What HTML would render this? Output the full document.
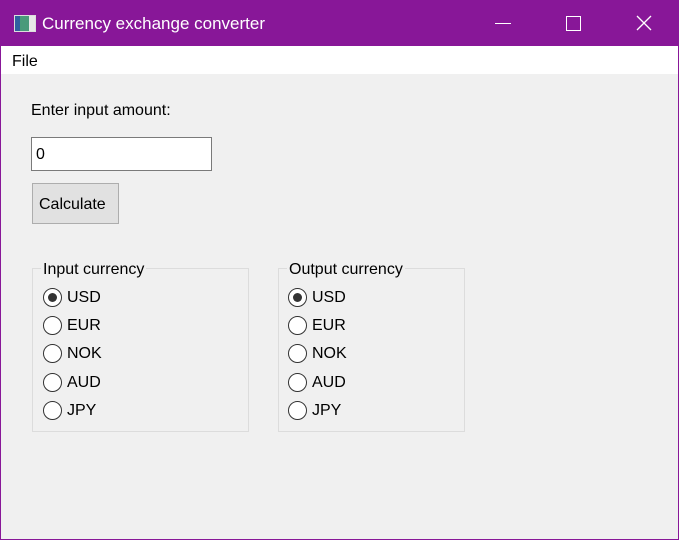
<!DOCTYPE html><html><head><style>
body{margin:0;width:679px;height:540px;overflow:hidden;font-family:"Liberation Sans",sans-serif;background:#f0f0f0;position:relative}
.win{position:absolute;left:0;top:0;width:677px;height:538px;border:1px solid #881798}
.t{position:absolute;left:0;top:0;width:679px;height:46px;background:#881798;color:#fff}
.a{position:absolute;font-size:16px;color:#000;white-space:nowrap}
.g{position:absolute;border:1px solid #dcdcdc}
.r{position:absolute;width:19px;height:19px;border:1.5px solid #333;border-radius:50%;background:#fff;box-sizing:border-box}
.r.c::after{content:"";position:absolute;left:3.5px;top:3.5px;width:9px;height:9px;border-radius:50%;background:#333}
</style></head><body>
<div class="win"></div>
<div class="t">
<div style="position:absolute;left:14px;top:15px;width:20px;height:15px;background:#4a9a7a;border:1px solid #ddd"><div style="position:absolute;left:0;top:0;width:5px;height:15px;background:#3060a0"></div><div style="position:absolute;right:0;top:0;width:6px;height:15px;background:#e8e8e8"></div></div>
<div class="a" style="left:42px;top:14px;color:#fff;font-size:17px">Currency exchange converter</div>
<div style="position:absolute;left:495px;top:23px;width:16px;height:1px;background:#fff"></div>
<div style="position:absolute;left:566px;top:16px;width:13px;height:13px;border:1px solid #fff"></div>
<svg style="position:absolute;left:636px;top:15px" width="16" height="16"><path d="M1 1L15 15M15 1L1 15" stroke="#fff" stroke-width="1.3"/></svg>
</div>
<div style="position:absolute;left:1px;top:46px;width:677px;height:28px;background:#fff"></div>
<div class="a" style="left:12px;top:53px">File</div>
<div class="a" style="left:31px;top:102px">Enter input amount:</div>
<div style="position:absolute;left:31px;top:137px;width:181px;height:34px;border:1px solid #7a7a7a;background:#fff;box-sizing:border-box"></div>
<div class="a" style="left:36px;top:146px">0</div>
<div style="position:absolute;left:32px;top:183px;width:87px;height:41px;border:1px solid #adadad;background:#e1e1e1;box-sizing:border-box"></div>
<div class="a" style="left:39px;top:196px">Calculate</div>
<div class="g" style="left:32px;top:268px;width:215px;height:162px"></div>
<div class="a" style="left:41px;top:261px;background:#f0f0f0;padding:0 2px">Input currency</div>
<div class="g" style="left:278px;top:268px;width:185px;height:162px"></div>
<div class="a" style="left:287px;top:261px;background:#f0f0f0;padding:0 2px">Output currency</div>
<div class="r c" style="left:43px;top:288px"></div><div class="a" style="left:67px;top:289px">USD</div>
<div class="r" style="left:43px;top:316px"></div><div class="a" style="left:67px;top:317px">EUR</div>
<div class="r" style="left:43px;top:344px"></div><div class="a" style="left:67px;top:345px">NOK</div>
<div class="r" style="left:43px;top:373px"></div><div class="a" style="left:67px;top:374px">AUD</div>
<div class="r" style="left:43px;top:401px"></div><div class="a" style="left:67px;top:402px">JPY</div>
<div class="r c" style="left:288px;top:288px"></div><div class="a" style="left:312px;top:289px">USD</div>
<div class="r" style="left:288px;top:316px"></div><div class="a" style="left:312px;top:317px">EUR</div>
<div class="r" style="left:288px;top:344px"></div><div class="a" style="left:312px;top:345px">NOK</div>
<div class="r" style="left:288px;top:373px"></div><div class="a" style="left:312px;top:374px">AUD</div>
<div class="r" style="left:288px;top:401px"></div><div class="a" style="left:312px;top:402px">JPY</div>
</body></html>
